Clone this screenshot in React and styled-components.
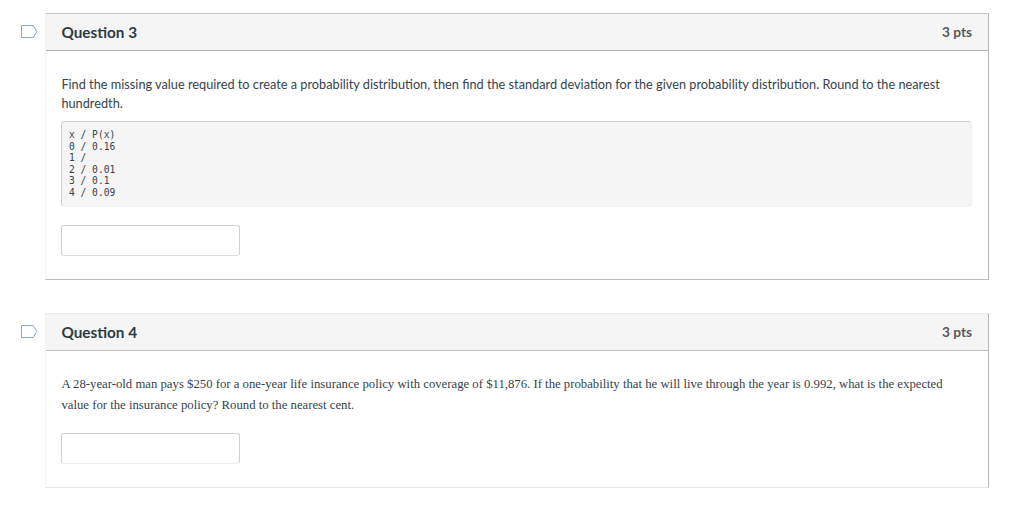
import React from 'react';
import styled, { createGlobalStyle } from 'styled-components';

function App() {
  return (
    <>
      <GlobalStyle />
      <Quiz>
        <Question>
          <Flag />
          <Card $top="#c3c4c5" $bottom="#bcbdbe">
            <Header $line="#b0b1b2">
              <Name>Question 3</Name>
              <Points>3 pts</Points>
            </Header>
            <Body $height={228}>
              <Text>
                Find the missing value required to create a probability distribution, then find the standard deviation for the given probability distribution. Round to the nearest<br />
                hundredth.
              </Text>
              <Table>{'x / P(x)\n0 / 0.16\n1 /\n2 / 0.01\n3 / 0.1\n4 / 0.09'}</Table>
              <Answer type="text" $bottom="#dcddde" />
            </Body>
          </Card>
        </Question>
        <Question>
          <Flag />
          <Card $top="#ececec" $bottom="#e6e7e8">
            <Header $line="#bfc0c1">
              <Name>Question 4</Name>
              <Points>3 pts</Points>
            </Header>
            <Body $height={136}>
              <SerifText>
                A 28-year-old man pays $250 for a one-year life insurance policy with coverage of $11,876. If the probability that he will live through the year is 0.992, what is the expected<br />
                value for the insurance policy? Round to the nearest cent.
              </SerifText>
              <Answer type="text" $bottom="#f0f0f0" />
            </Body>
          </Card>
        </Question>
      </Quiz>
    </>
  )
}

function Flag() {
  return (
    <FlagIcon viewBox="0 0 17 13">
      <path d="M0.5 0.5H12.3L15.8 6.5L12.3 12.5H0.5Z" />
    </FlagIcon>
  )
}

export default App;

const GlobalStyle = createGlobalStyle`
    * {
        box-sizing: border-box;
    }

    body {
        margin: 0;
        background: #fff;
        color: #2d3b45;
        font-family: Lato, "Liberation Sans", sans-serif;
        overflow: hidden;
    }
`
const Quiz = styled.main`
    display: flex;
    flex-direction: column;
    gap: 33px;
    padding: 13px 35px 0 21px;
`
const Question = styled.section`
    display: flex;
    align-items: flex-start;
`
const FlagIcon = styled.svg`
    flex: none;
    width: 17px;
    height: 13px;
    margin: 12px 7px 0 0;
    fill: #fff;
    stroke: #8fa9c1;
`
const Card = styled.article`
    flex: 1;
    border: 1px solid #b4b5b7;
    border-left-color: #f3f3f3;
    border-top-color: ${(props) => props.$top};
    border-bottom-color: ${(props) => props.$bottom};
`
const Header = styled.header`
    display: flex;
    align-items: center;
    justify-content: space-between;
    height: 37px;
    padding: 0 16px 0 15.4px;
    background: #f5f5f5;
    border-bottom: 1px solid ${(props) => props.$line};
`
const Name = styled.h2`
    margin: 0;
    font-size: 15.3px;
    font-weight: bold;
    line-height: 18px;
`
const Points = styled.span`
    color: #595959;
    font-size: 13.7px;
    font-weight: bold;
    line-height: 18px;
`
const Body = styled.div`
    height: ${(props) => props.$height}px;
    padding: 24px 16px 0 15px;
    color: #36434d;
`
const Text = styled.p`
    margin: 0 0 8px 0.4px;
    font-size: 12.74px;
    line-height: 19px;
    white-space: nowrap;
`
const SerifText = styled.p`
    margin: -1px 0 18px 0.4px;
    font-family: "Liberation Serif", serif;
    font-size: 12.74px;
    line-height: 20.5px;
    white-space: nowrap;
`
const Table = styled.pre`
    height: 86px;
    margin: 0 0 18px;
    padding: 7.4px 7px;
    background: #f5f5f5;
    border: 1px solid #d0d1d2;
    border-right-color: #f2f2f2;
    border-bottom-color: #f2f2f2;
    border-radius: 4px;
    font-family: "DejaVu Sans Mono", monospace;
    font-size: 9.6px;
    line-height: 11.5px;
`
const Answer = styled.input`
    display: block;
    width: 179px;
    height: 31px;
    padding: 4px 8px;
    background: #fff;
    border: 1px solid #cfd0d1;
    border-bottom-color: ${(props) => props.$bottom};
    border-radius: 3px;
    color: inherit;
    font: inherit;
`
